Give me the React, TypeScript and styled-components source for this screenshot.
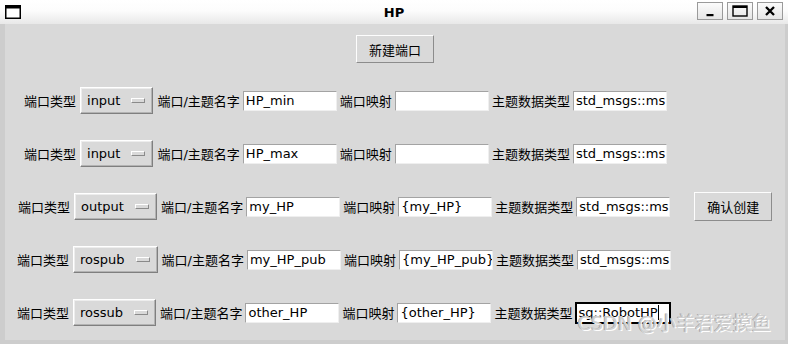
import styled, { createGlobalStyle } from 'styled-components';

const GlobalStyle = createGlobalStyle`
  html, body {
    margin: 0;
    padding: 0;
    background: #d9d9d9;
  }
  body {
    font-family: "DejaVu Sans", "Noto Sans CJK SC", sans-serif;
    font-size: 13px;
    color: #000;
  }
`;

const Window = styled.div`
  position: relative;
  width: 788px;
  height: 344px;
  display: flex;
  flex-direction: column;
  overflow: hidden;
`;

const TitleBar = styled.div`
  flex: none;
  height: 24px;
  display: grid;
  grid-template-columns: 1fr auto 1fr;
  align-items: center;
  background: linear-gradient(#ffffff 0%, #fcfcfc 45%, #e8e8e8 100%);
`;

const AppIcon = styled.div`
  display: flex;
  padding-left: 5px;
`;

const Title = styled.div`
  font-weight: bold;
  font-size: 13px;
`;

const Controls = styled.div`
  display: flex;
  justify-content: flex-end;
  gap: 4px;
  padding-right: 5px;
  padding-bottom: 2px;
`;

const CtrlButton = styled.div`
  width: 26px;
  height: 18px;
  box-sizing: border-box;
  border: 1px solid #9a9a9a;
  background: linear-gradient(#fbfbfb, #e6e6e6);
  display: flex;
  align-items: center;
  justify-content: center;
`;

const Body = styled.div`
  flex: 1;
  display: flex;
  flex-direction: column;
  background: #d9d9d9;
  border-left: 5px solid #cdcdcd;
  border-right: 3px solid #cdcdcd;
  border-bottom: 4px solid #cdcdcd;
`;

const TopBar = styled.div`
  display: flex;
  justify-content: center;
  padding-top: 11px;
  margin-bottom: 11px;
`;

const Button = styled.div`
  height: 28px;
  box-sizing: border-box;
  padding: 0 12px;
  display: inline-flex;
  align-items: center;
  border: 1px solid;
  border-color: #fdfdfd #8c8c8c #8c8c8c #fdfdfd;
  background: #d9d9d9;
  white-space: nowrap;
`;

const ConfirmButton = styled(Button)`
  height: 29px;
  margin-left: 22px;
`;

const Row = styled.div<{ $indent: number }>`
  height: 53px;
  display: flex;
  align-items: center;
  gap: 2px;
  padding-left: ${(p) => p.$indent}px;
`;

const Label = styled.span`
  padding: 0 1px;
  white-space: nowrap;
`;

const MenuButton = styled.div`
  height: 27px;
  box-sizing: border-box;
  display: inline-flex;
  align-items: center;
  padding: 0 7px 0 6px;
  border: 1px solid;
  border-color: #ffffff #7f7f7f #7f7f7f #ffffff;
  box-shadow: inset -1px -1px #b3b3b3, inset 1px 1px #ededed;
  background: #d9d9d9;
  margin: 0 1px;
`;

const Indicator = styled.span`
  width: 14px;
  height: 5px;
  box-sizing: border-box;
  margin-left: 11px;
  border: 1px solid;
  border-color: #ffffff #8a8a8a #8a8a8a #ffffff;
  background: #d9d9d9;
`;

const Entry = styled.div<{ $focused?: boolean }>`
  width: 94px;
  height: 20px;
  box-sizing: border-box;
  padding: 0 2px;
  display: flex;
  align-items: center;
  overflow: hidden;
  white-space: nowrap;
  background: #fff;
  border: 1px solid;
  border-color: ${(p) => (p.$focused ? '#000' : '#a3a3a3 #efefef #efefef #a3a3a3')};
  outline: 1px solid ${(p) => (p.$focused ? '#000' : 'transparent')};
`;

const Caret = styled.span`
  width: 1px;
  height: 15px;
  background: #000;
  flex: none;
`;

const Watermark = styled.div`
  position: absolute;
  right: 17px;
  bottom: 9px;
  font-size: 19px;
  color: #cfcfcf;
  text-shadow: 1px 1px 0 #ffffff, -1px 0 0 #a8a8a8;
  white-space: nowrap;
  pointer-events: none;
`;

type PortRow = {
  indent: number;
  type: string;
  name: string;
  map: string;
  dtype: string;
  confirm?: boolean;
  focused?: boolean;
};

const rows: PortRow[] = [
  { indent: 18, type: 'input', name: 'HP_min', map: '', dtype: 'std_msgs::ms' },
  { indent: 18, type: 'input', name: 'HP_max', map: '', dtype: 'std_msgs::ms' },
  { indent: 12, type: 'output', name: 'my_HP', map: '{my_HP}', dtype: 'std_msgs::ms', confirm: true },
  { indent: 11, type: 'rospub', name: 'my_HP_pub', map: '{my_HP_pub}', dtype: 'std_msgs::ms' },
  { indent: 11, type: 'rossub', name: 'other_HP', map: '{other_HP}', dtype: 'sg::RobotHP', focused: true },
];

export default function App() {
  return (
    <>
      <GlobalStyle />
      <Window>
        <TitleBar>
          <AppIcon>
            <svg width="16" height="14" viewBox="0 0 16 14">
              <rect x="0.75" y="0.75" width="14.5" height="12.5" fill="#fff" stroke="#000" strokeWidth="1.5" />
              <rect x="0" y="0" width="16" height="3.5" fill="#000" />
            </svg>
          </AppIcon>
          <Title>HP</Title>
          <Controls>
            <CtrlButton>
              <svg width="12" height="12" viewBox="0 0 12 12">
                <rect x="2.5" y="9" width="7" height="2.2" fill="#000" />
              </svg>
            </CtrlButton>
            <CtrlButton>
              <svg width="16" height="12" viewBox="0 0 16 12">
                <rect x="1" y="1" width="14" height="10" fill="none" stroke="#000" strokeWidth="1.4" />
                <rect x="1" y="1" width="14" height="2" fill="#000" />
              </svg>
            </CtrlButton>
            <CtrlButton>
              <svg width="12" height="12" viewBox="0 0 12 12">
                <path d="M2 2 L10 10 M10 2 L2 10" stroke="#000" strokeWidth="2.3" />
              </svg>
            </CtrlButton>
          </Controls>
        </TitleBar>
        <Body>
          <TopBar>
            <Button>新建端口</Button>
          </TopBar>
          {rows.map((r) => (
            <Row key={r.name} $indent={r.indent}>
              <Label>端口类型</Label>
              <MenuButton>
                {r.type}
                <Indicator />
              </MenuButton>
              <Label>端口/主题名字</Label>
              <Entry>{r.name}</Entry>
              <Label>端口映射</Label>
              <Entry>{r.map}</Entry>
              <Label>主题数据类型</Label>
              <Entry $focused={r.focused}>
                {r.dtype}
                {r.focused && <Caret />}
              </Entry>
              {r.confirm && <ConfirmButton>确认创建</ConfirmButton>}
            </Row>
          ))}
        </Body>
        <Watermark>CSDN @小羊君爱摸鱼</Watermark>
      </Window>
    </>
  );
}
